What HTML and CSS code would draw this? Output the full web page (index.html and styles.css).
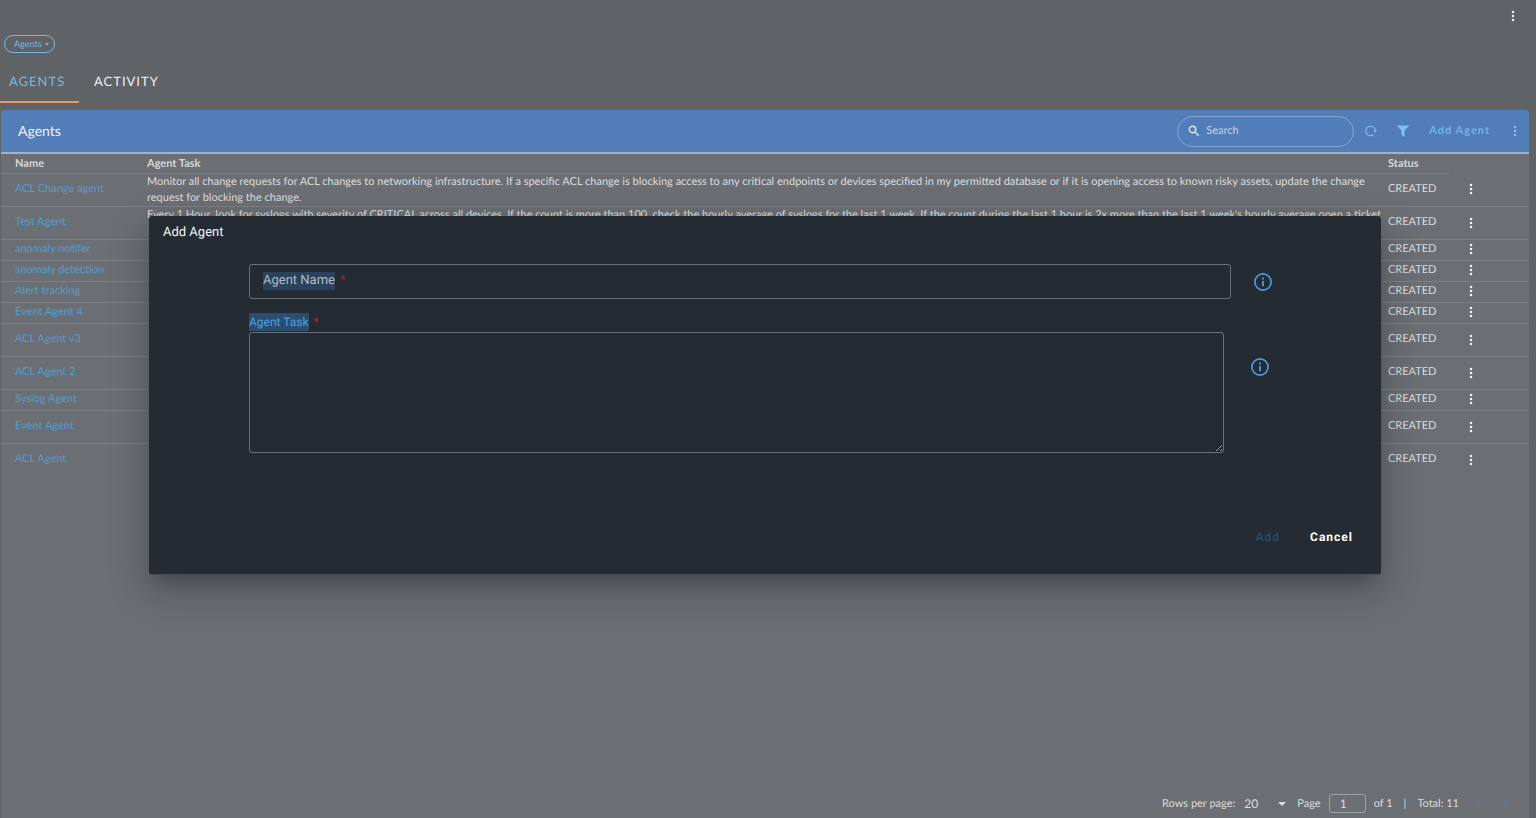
FILE: index.html
```html
<!DOCTYPE html>
<html lang="en">
<head>
<meta charset="utf-8">
<title>Agents</title>
<link rel="stylesheet" href="styles.css">
</head>
<body>
<svg class="defs" aria-hidden="true">
  <symbol id="dots" viewBox="0 0 4 12"><circle cx="2" cy="2" r="1.25"/><circle cx="2" cy="6" r="1.25"/><circle cx="2" cy="10" r="1.25"/></symbol>
  <symbol id="info" viewBox="0 0 18 18"><circle cx="9" cy="9" r="8.1" fill="none" stroke="currentColor" stroke-width="1.7"/><path d="M8.1 4.6h1.8v1.8H8.1zM8.1 8h1.8v5.3H8.1z"/></symbol>
</svg>
<div class="page">
  <header class="topbar">
    <button class="dots-btn" aria-label="Page menu"><svg class="dots"><use href="#dots"/></svg></button>
  </header>
  <div class="crumbs">
    <button class="chip">Agents <svg class="chip-caret" viewBox="0 0 4 3"><path d="M0 0h4L2 2.6z"/></svg></button>
  </div>
  <nav class="tabs">
    <a class="tab tab-active" href="#agents">AGENTS</a>
    <a class="tab" href="#activity">ACTIVITY</a>
  </nav>
  <main class="panel">
    <div class="panel-head">
      <h1 class="panel-title">Agents</h1>
      <label class="search">
        <svg class="search-icon" viewBox="0 0 12 12"><circle cx="4.5" cy="4.5" r="3.2" fill="none" stroke="currentColor" stroke-width="1.4"/><path d="M6.6 7.4l.8-.8 3.8 3.7-.9.9z"/></svg>
        <input class="search-input" type="text" placeholder="Search" aria-label="Search">
      </label>
      <button class="tool" aria-label="Refresh"><svg class="refresh" viewBox="0 0 12 12"><path d="M8.4 9.700A4.700 4.700 0 1 1 10.300 5.600" fill="none" stroke="currentColor" stroke-width="1.1"/><path d="M8.300 5.200H12L10.200 7.800z"/></svg></button>
      <button class="tool" aria-label="Filter"><svg class="funnel" viewBox="0 0 12 12"><path d="M.6.5h10.8c.4 0 .5.5.2.8L7.5 5.6v5.700c0 .5-.4.6-.8.3L4.800 10.200a.8.8 0 0 1-.3-.6v-4L.4 1.300C.1 1 .2.5.6.5z"/></svg></button>
      <button class="tool add">Add Agent</button>
      <button class="tool" aria-label="Panel menu"><svg class="dots"><use href="#dots"/></svg></button>
    </div>
    <table class="grid">
      <colgroup><col class="c-name"><col><col class="c-status"><col class="c-menu"></colgroup>
      <thead><tr><th>Name</th><th>Agent Task</th><th>Status</th><th class="blank"></th></tr></thead>
      <tbody>
        <tr class="tall"><td><a href="#1">ACL Change agent</a></td><td class="task">Monitor all change requests for ACL changes to networking infrastructure. If a specific ACL change is blocking access to any critical endpoints or devices specified in my permitted database or if it is opening access to known risky assets, update the change<br>request for blocking the change.</td><td>CREATED</td><td><button class="dots-btn" aria-label="Row menu"><svg class="dots"><use href="#dots"/></svg></button></td></tr>
        <tr class="tall"><td><a href="#2">Test Agent</a></td><td class="task">Every 1 Hour, look for syslogs with severity of CRITICAL across all devices. If the count is more than 100, check the hourly average of syslogs for the last 1 week. If the count during the last 1 hour is 2x more than the last 1 week's hourly average open a ticket<br>&nbsp;</td><td>CREATED</td><td><button class="dots-btn" aria-label="Row menu"><svg class="dots"><use href="#dots"/></svg></button></td></tr>
        <tr><td><a href="#3">anomaly notifer</a></td><td></td><td>CREATED</td><td><button class="dots-btn" aria-label="Row menu"><svg class="dots"><use href="#dots"/></svg></button></td></tr>
        <tr><td><a href="#4">anomaly detection</a></td><td></td><td>CREATED</td><td><button class="dots-btn" aria-label="Row menu"><svg class="dots"><use href="#dots"/></svg></button></td></tr>
        <tr><td><a href="#5">Alert tracking</a></td><td></td><td>CREATED</td><td><button class="dots-btn" aria-label="Row menu"><svg class="dots"><use href="#dots"/></svg></button></td></tr>
        <tr><td><a href="#6">Event Agent 4</a></td><td></td><td>CREATED</td><td><button class="dots-btn" aria-label="Row menu"><svg class="dots"><use href="#dots"/></svg></button></td></tr>
        <tr class="tall"><td><a href="#7">ACL Agent v3</a></td><td></td><td>CREATED</td><td><button class="dots-btn" aria-label="Row menu"><svg class="dots"><use href="#dots"/></svg></button></td></tr>
        <tr class="tall"><td><a href="#8">ACL Agent 2</a></td><td></td><td>CREATED</td><td><button class="dots-btn" aria-label="Row menu"><svg class="dots"><use href="#dots"/></svg></button></td></tr>
        <tr><td><a href="#9">Syslog Agent</a></td><td></td><td>CREATED</td><td><button class="dots-btn" aria-label="Row menu"><svg class="dots"><use href="#dots"/></svg></button></td></tr>
        <tr class="tall"><td><a href="#10">Event Agent</a></td><td></td><td>CREATED</td><td><button class="dots-btn" aria-label="Row menu"><svg class="dots"><use href="#dots"/></svg></button></td></tr>
        <tr class="tall last"><td><a href="#11">ACL Agent</a></td><td></td><td>CREATED</td><td><button class="dots-btn" aria-label="Row menu"><svg class="dots"><use href="#dots"/></svg></button></td></tr>
      </tbody>
    </table>
    <footer class="pager">
      <label for="rows">Rows per page:</label>
      <span class="rows"><select id="rows"><option>20</option></select><svg class="caret" viewBox="0 0 8 4"><path d="M0 0h8L4 4z"/></svg></span>
      <label for="pageno">Page</label>
      <input id="pageno" class="pageno" type="text" value="1">
      <span>of 1</span>
      <span class="sep">|</span>
      <span>Total: 11</span>
      <button class="step" aria-label="Previous page"><svg viewBox="0 0 6 8"><path d="M4.500.5L1 4l3.500 3.500"/></svg></button>
      <button class="step" aria-label="Next page"><svg viewBox="0 0 6 8"><path d="M1.500.5L5 4 1.500 7.500"/></svg></button>
    </footer>
  </main>
</div>
<div class="overlay">
  <form class="dialog" role="dialog" aria-labelledby="dlg-title">
    <h2 id="dlg-title" class="dialog-title">Add Agent</h2>
    <div class="field">
      <div class="box">
        <label for="agent-name"><span class="mark">Agent Name</span><span class="req">*</span></label>
        <input id="agent-name" type="text">
      </div>
      <svg class="info"><use href="#info"/></svg>
    </div>
    <label class="task-label" for="agent-task"><span class="mark">Agent Task</span><span class="req">*</span></label>
    <div class="field field-task">
      <textarea id="agent-task"></textarea>
      <svg class="info"><use href="#info"/></svg>
    </div>
    <div class="actions">
      <button type="button" class="action" disabled>Add</button>
      <button type="button" class="action">Cancel</button>
    </div>
  </form>
</div>
</body>
</html>
```
FILE: styles.css
```css
* { box-sizing: border-box; }
body {
  margin: 0;
  background: #5f6365;
  color: #dcdddf;
  font: 11px/16px Lato, sans-serif;
  text-rendering: geometricPrecision;
}
button, input, select, textarea { font: inherit; color: inherit; text-rendering: inherit; }
button { background: none; border: 0; padding: 0; }
a { color: #4f9dd6; text-decoration: none; }
.defs { position: absolute; width: 0; height: 0; }
.page { display: flex; flex-direction: column; min-height: 100vh; }
.topbar { display: flex; justify-content: flex-end; padding: 10px 21px 0 0; height: 35px; }
.dots-btn { display: block; height: 12px; color: #f4f4f4; }
.dots { display: block; width: 4px; height: 12px; fill: currentColor; }

.crumbs { padding-left: 4px; height: 25px; }
.chip {
  display: flex; align-items: center; gap: 3px;
  height: 18px; width: 51px; padding-left: 9px;
  border: 1px solid #7ab8e6; border-radius: 9px;
  color: #7ab8e6; font-size: 9px;
}
.chip-caret { width: 4px; height: 3px; fill: currentColor; }

.tabs { display: flex; height: 43px; }
.tab {
  padding: 12px 16px 0 15px;
  border-bottom: 2px solid transparent;
  color: #f0f0f0; font-size: 13px; line-height: 18px; letter-spacing: 1px;
}
.tab-active { width: 79px; padding: 12px 0 0 9px; color: #7ab8e6; border-color: #f0965a; }

.panel {
  flex: 1; display: flex; flex-direction: column;
  margin: 7px 7px 0 1px;
  background: #6b6f73;
  border-radius: 4px 4px 0 0;
}
.panel-head {
  display: flex; align-items: center;
  height: 44px; padding: 0 12px 0 17px;
  background: #517eb8;
  border-bottom: 2px solid #a2b2cc;
  border-radius: 4px 4px 0 0;
}
.panel-title { flex: 1; margin: 0; font-size: 14px; font-weight: 400; color: #f0f2f5; }
.search {
  display: flex; align-items: center; gap: 6px;
  width: 177px; height: 31px; padding: 0 11px 1px 10px; margin-right: 11px;
  border: 1px solid #87a6d1; border-radius: 16px;
  color: #dfe8f4;
}
.search-icon { width: 12px; height: 12px; fill: currentColor; flex: none; }
.search-input { flex: 1; min-width: 0; padding: 0; border: 0; background: none; outline: 0; }
.search-input::placeholder { color: #c5d3e8; opacity: 1; }
.tool { color: #7cc2f5; margin-right: 20px; }
.tool:last-child { margin: 0; }
.refresh, .funnel { display: block; width: 12px; height: 12px; fill: currentColor; }
.add { letter-spacing: 1px; margin-right: 23px; font-weight: 700; color: #70b2ec; }

.grid { width: 100%; table-layout: fixed; border-collapse: collapse; }
.c-name { width: 132px; }
.c-status { width: 75px; }
.c-menu { width: 80px; }
.grid th, .grid td { padding: 0 0 0 14px; text-align: left; white-space: nowrap; border-bottom: 1px solid #7d8185; }
.grid th { height: 19px; padding-top: 1px; font-weight: 700; color: #d5d6d8; }
.grid th.blank { border: 0; }
.grid td { height: 21px; padding-bottom: 1px; }
.grid td:last-child { padding-left: 20px; }
.grid .tall td { height: 33px; padding-bottom: 2px; }
.grid .tall td:last-child { padding-bottom: 0; }
.grid .tall .task { padding-bottom: 0; }
.grid .last td { border: 0; }

.pager {
  display: flex; align-items: center;
  margin-top: auto; padding: 0 20px 5px 0; height: 24px;
  justify-content: flex-end;
}
.rows { display: flex; align-items: center; margin: 0 11px 0 9px; font-size: 12px; }
.rows select { appearance: none; width: 34px; padding: 0; border: 0; background: none; }
.caret { width: 8px; height: 4px; fill: currentColor; }
.pageno {
  width: 37px; height: 19px; margin: 0 8px; padding: 0 0 0 10px;
  border: 1px solid #a0a3a6; border-radius: 3px; background: none; font-size: 12px;
}
.sep { margin: 0 11px; }
.step { margin-left: 16px; }
.step + .step { margin-left: 22px; }
.step svg { display: block; width: 6px; height: 8px; fill: none; stroke: #567f9f; stroke-width: 1.2; }

.overlay { position: absolute; inset: 0; display: flex; align-items: flex-start; justify-content: center; padding: 216px 155px 0 149px; }
.dialog {
  width: 100%;
  padding: 8px 0 28px 100px;
  background: #242b33;
  border-bottom: 1px solid #4a5056;
  border-radius: 3px;
  box-shadow: 0 11px 15px -7px rgba(0,0,0,.2), 0 14px 38px 3px rgba(0,0,0,.24);
  color: #f2f2f2;
  font: 13px/18px Roboto, sans-serif;
}
.dialog-title { margin: 0 0 22px -86px; font-size: 13px; line-height: 18px; font-weight: 400; }
.field { display: flex; align-items: center; gap: 23px; padding-right: 109px; }
.box {
  flex: 1; display: flex; align-items: center;
  height: 35px; padding: 0 13px 1px;
  border: 1px solid #6d7278; border-radius: 3px;
  color: #b4b8bd;
}
.box input { flex: 1; min-width: 0; border: 0; background: none; outline: 0; }
.mark { display: inline-block; background: #29435c; }
.req { margin-left: 5px; color: #b5121f; }
.info { flex: none; width: 18px; height: 18px; color: #479fe0; fill: currentColor; }
.task-label { display: block; margin-top: 14px; color: #4aa3e3; font-size: 12px; }
.task-label .mark { background: #2b4d6e; }
.task-label .req { color: #e0101c; }
.field-task { align-items: flex-start; gap: 27px; padding-right: 112px; margin-top: 1px; }
.field-task .info { margin-top: 26px; }
textarea {
  flex: 1; height: 121px; margin: 0;
  border: 1px solid #6d7278; border-radius: 3px; background: none; outline: 0; resize: vertical;
}
.actions { display: flex; justify-content: flex-end; gap: 30px; padding-right: 28px; margin-top: 75px; }
.action { font-size: 12px; font-weight: 700; letter-spacing: 1px; color: #fff; }
.action:disabled { color: #2b4a63; }
```
